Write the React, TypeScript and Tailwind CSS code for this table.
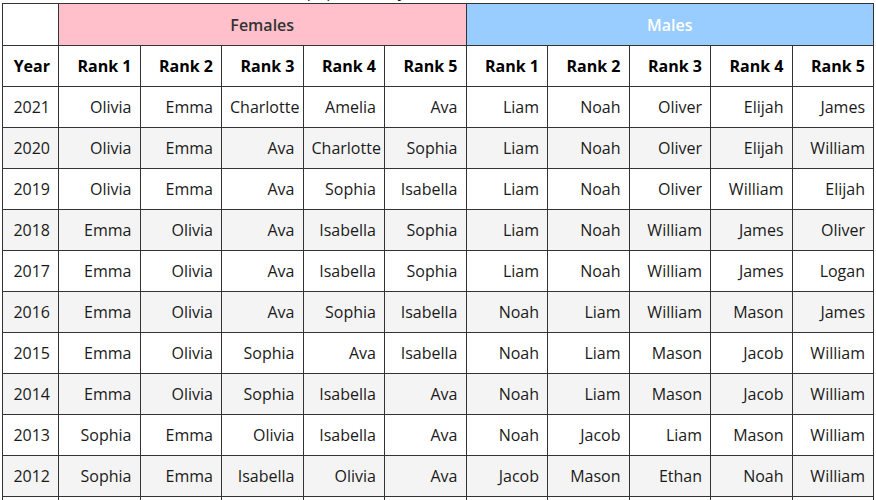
const ROWS: [string, string[], string[]][] = [
  ['2021', ['Olivia', 'Emma', 'Charlotte', 'Amelia', 'Ava'], ['Liam', 'Noah', 'Oliver', 'Elijah', 'James']],
  ['2020', ['Olivia', 'Emma', 'Ava', 'Charlotte', 'Sophia'], ['Liam', 'Noah', 'Oliver', 'Elijah', 'William']],
  ['2019', ['Olivia', 'Emma', 'Ava', 'Sophia', 'Isabella'], ['Liam', 'Noah', 'Oliver', 'William', 'Elijah']],
  ['2018', ['Emma', 'Olivia', 'Ava', 'Isabella', 'Sophia'], ['Liam', 'Noah', 'William', 'James', 'Oliver']],
  ['2017', ['Emma', 'Olivia', 'Ava', 'Isabella', 'Sophia'], ['Liam', 'Noah', 'William', 'James', 'Logan']],
  ['2016', ['Emma', 'Olivia', 'Ava', 'Sophia', 'Isabella'], ['Noah', 'Liam', 'William', 'Mason', 'James']],
  ['2015', ['Emma', 'Olivia', 'Sophia', 'Ava', 'Isabella'], ['Noah', 'Liam', 'Mason', 'Jacob', 'William']],
  ['2014', ['Emma', 'Olivia', 'Sophia', 'Isabella', 'Ava'], ['Noah', 'Liam', 'Mason', 'Jacob', 'William']],
  ['2013', ['Sophia', 'Emma', 'Olivia', 'Isabella', 'Ava'], ['Noah', 'Jacob', 'Liam', 'Mason', 'William']],
  ['2012', ['Sophia', 'Emma', 'Isabella', 'Olivia', 'Ava'], ['Jacob', 'Mason', 'Ethan', 'Noah', 'William']],
  ['2011', ['Sophia', 'Isabella', 'Emma', 'Olivia', 'Ava'], ['Jacob', 'Mason', 'William', 'Jayden', 'Noah']],
  ['2010', ['Isabella', 'Sophia', 'Emma', 'Olivia', 'Ava'], ['Jacob', 'Ethan', 'Michael', 'Jayden', 'William']],
];

const RANKS = [1, 2, 3, 4, 5];

const cell = 'border border-[#333] px-2 py-2 text-right leading-6';

export default function App() {
  return (
    <div className="h-[500px] overflow-hidden bg-white pl-[2px] text-[#1a1a1a] [font-family:'Open_Sans','Noto_Sans',sans-serif] text-[16px]">
      <table className="-mt-[21px] w-[872px] table-fixed border-collapse">
        <caption className="text-center leading-6">Most popular baby names in the United States</caption>
        <colgroup>
          <col className="w-[56px]" />
          {Array.from({ length: 10 }).map((_, i) => (
            <col key={i} />
          ))}
        </colgroup>
        <thead>
          <tr className="h-[42px]">
            <th className="border border-[#333] leading-6"></th>
            <th colSpan={5} className="border border-[#333] bg-[#ffc0cb] text-center font-semibold leading-6 text-[#333]">
              Females
            </th>
            <th colSpan={5} className="border border-[#333] bg-[#99ccff] text-center font-semibold leading-6 text-white">
              Males
            </th>
          </tr>
          <tr>
            <th className={`${cell} font-bold text-black`}>Year</th>
            {RANKS.map((r) => (
              <th key={`f${r}`} className={`${cell} font-bold text-black`}>Rank {r}</th>
            ))}
            {RANKS.map((r) => (
              <th key={`m${r}`} className={`${cell} font-bold text-black`}>Rank {r}</th>
            ))}
          </tr>
        </thead>
        <tbody>
          {ROWS.map(([year, girls, boys], i) => (
            <tr key={year} className={i % 2 === 1 ? 'bg-[#f4f4f4]' : 'bg-white'}>
              <td className={cell}>{year}</td>
              {girls.map((n, j) => (
                <td key={`g${j}`} className={cell}>{n}</td>
              ))}
              {boys.map((n, j) => (
                <td key={`b${j}`} className={cell}>{n}</td>
              ))}
            </tr>
          ))}
        </tbody>
      </table>
    </div>
  );
}
